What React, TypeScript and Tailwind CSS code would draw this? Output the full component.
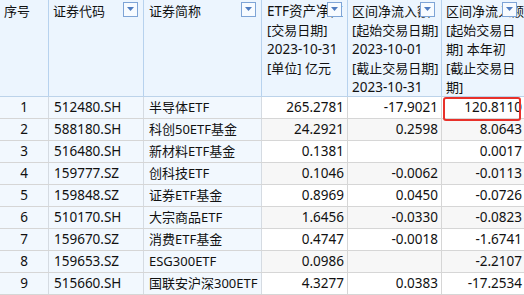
import React from "react";

const rows: [string, string, string, string, string, string][] = [
  ["1", "512480.SH", "半导体ETF", "265.2781", "-17.9021", "120.8110"],
  ["2", "588180.SH", "科创50ETF基金", "24.2921", "0.2598", "8.0643"],
  ["3", "516480.SH", "新材料ETF基金", "0.1381", "", "0.0017"],
  ["4", "159777.SZ", "创科技ETF", "0.1046", "-0.0062", "-0.0113"],
  ["5", "159848.SZ", "证券ETF基金", "0.8969", "0.0450", "-0.0726"],
  ["6", "510170.SH", "大宗商品ETF", "1.6456", "-0.0330", "-0.0823"],
  ["7", "159670.SZ", "消费ETF基金", "0.4747", "-0.0018", "-1.6741"],
  ["8", "159653.SZ", "ESG300ETF", "0.0986", "", "-2.2107"],
  ["9", "515660.SH", "国联安沪深300ETF", "4.3277", "0.0383", "-17.2534"],
];

function Drop({ right }: { right: string }) {
  return (
    <div
      className={`absolute top-[2px] ${right} w-[15px] h-[15px] border border-[#7ea4d6] bg-[#f7fbff] flex justify-center pt-[4px]`}
    >
      <svg width="7" height="4" viewBox="0 0 7 4">
        <polygon points="0,0 7,0 3.5,4" fill="#4f7cc0" />
      </svg>
    </div>
  );
}

export default function App() {
  const hcell =
    "relative h-full shrink-0 border-r border-[#b7d2ee] bg-[#ecf5fe] overflow-hidden pt-[2px] leading-[19px] whitespace-nowrap";
  const d = "text-[13.5px]";
  return (
    <div
      className="relative w-[524px] h-[295px] overflow-hidden bg-white text-[13px] text-[#111]"
      style={{ fontFamily: '"Noto Sans", "Noto Sans CJK SC", sans-serif' }}
    >
      <div className="flex w-[526px] h-[97px] border-b border-[#bcd3ea]">
        <div className={`${hcell} w-[49px] pl-[4px]`}>序号</div>
        <div className={`${hcell} w-[95px] pl-[4px]`}>
          证券代码
          <Drop right="right-[5px]" />
        </div>
        <div className={`${hcell} w-[118px] pl-[5px]`}>
          证券简称
          <Drop right="right-[5px]" />
        </div>
        <div className={`${hcell} w-[86px] pl-[5px]`}>
          <div className={d}>ETF资产净值</div>
          <div>[交易日期]</div>
          <div className={d}>2023-10-31</div>
          <div>[单位] 亿元</div>
          <Drop right="right-[5px]" />
        </div>
        <div className={`${hcell} w-[94px] pl-[4px]`}>
          <div>区间净流入额</div>
          <div>[起始交易日期]</div>
          <div className={d}>2023-10-01</div>
          <div>[截止交易日期]</div>
          <div className={d}>2023-10-31</div>
          <Drop right="right-[6px]" />
        </div>
        <div className={`${hcell} w-[84px] pl-[4px]`}>
          <div>区间净流入额</div>
          <div>[起始交易日</div>
          <div>期] 本年初</div>
          <div>[截止交易日</div>
          <div>期]</div>
          <Drop right="right-[8px]" />
        </div>
      </div>
      {rows.map((r, i) => {
        const even = i % 2 === 1;
        const right = even ? "bg-[#f7f7f7]" : "bg-white";
        const lc =
          "h-full shrink-0 border-r border-[#d5dbe2] bg-[#f2f8fe] flex items-center whitespace-nowrap overflow-hidden";
        const rc = `h-full shrink-0 border-r border-[#d6d6d6] ${right} flex items-center justify-end pr-[3px] whitespace-nowrap text-[13.5px]`;
        return (
          <div key={i} className="flex w-[526px] h-[22px] border-b border-[#d6d6d6]">
            <div className={`${lc} w-[49px] justify-center text-[13.5px]`}>{r[0]}</div>
            <div className={`${lc} w-[95px] pl-[5px] text-[13.5px]`}>{r[1]}</div>
            <div className={`${lc} w-[118px] pl-[5px]`}>{r[2]}</div>
            <div className={`${rc} w-[86px]`}>{r[3]}</div>
            <div className={`${rc} w-[94px]`}>{r[4]}</div>
            <div className={`${rc} w-[84px]`}>{r[5]}</div>
          </div>
        );
      })}
      <div className="absolute left-[443px] top-[97px] w-[78px] h-[24px] border-2 border-[#e8312a] rounded-[3px]" />
    </div>
  );
}
